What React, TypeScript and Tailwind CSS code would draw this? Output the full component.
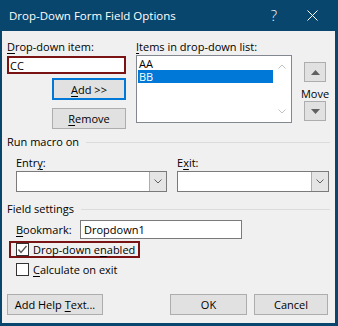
import type { ReactNode } from 'react'

const font = "font-['Open_Sans','Noto_Sans',sans-serif] text-[11px] leading-[15px] text-black"

function U({ children }: { children: ReactNode }) {
  return <span className="underline underline-offset-[2px] decoration-1">{children}</span>
}

function Button({ children, className = '', focused = false }: { children: ReactNode; className?: string; focused?: boolean }) {
  return (
    <div
      className={`flex items-center justify-center bg-[#e1e1e1] ${focused ? 'border-2 border-[#0078d7]' : 'border border-[#adadad]'} ${className}`}
    >
      {children}
    </div>
  )
}

function Chevron({ up = false, color = '#606060' }: { up?: boolean; color?: string }) {
  return (
    <svg width="8" height="5" viewBox="0 0 8 5" className="block">
      <polyline
        points={up ? '0.5,4.5 4,1 7.5,4.5' : '0.5,0.5 4,4 7.5,0.5'}
        fill="none"
        stroke={color}
        strokeWidth="1"
      />
    </svg>
  )
}

function Combo({ className = '' }: { className?: string }) {
  return (
    <div className={`flex h-[21px] border border-[#7a7a7a] bg-white ${className}`}>
      <div className="flex-1" />
      <div className="flex w-[17px] items-center justify-center border-l border-[#adadad] bg-[#e5e5e5]">
        <Chevron />
      </div>
    </div>
  )
}

function GroupHeader({ label }: { label: string }) {
  return (
    <div className="flex items-center">
      <span>{label}</span>
      <div className="ml-[7px] mt-[1px] h-px flex-1 bg-[#dcdcdc]" />
    </div>
  )
}

function Checkbox({ checked = false }: { checked?: boolean }) {
  return (
    <div className="flex h-[13px] w-[13px] items-center justify-center border border-[#333333] bg-white">
      {checked && (
        <svg width="11" height="11" viewBox="0 0 11 11" className="block">
          <polyline points="1.5,5.5 4,8.5 9.5,2" fill="none" stroke="#555555" strokeWidth="1.3" />
        </svg>
      )}
    </div>
  )
}

export default function App() {
  return (
    <div className={`flex h-[326px] w-[338px] flex-col bg-[#08466d] ${font}`}>
      {/* Title bar */}
      <div className="flex h-[31px] items-center pl-[9px] text-white">
        <span className="text-[11.5px] leading-[15px]">Drop-Down Form Field Options</span>
        <span className="ml-auto mr-[30px] text-[15px] font-light leading-[15px]">?</span>
        <svg width="11" height="11" viewBox="0 0 11 11" className="mr-[20px] block">
          <path d="M0.5 0.5 L10.5 10.5 M10.5 0.5 L0.5 10.5" stroke="white" strokeWidth="1" />
        </svg>
      </div>

      <div className="mb-[3px] ml-[2px] mr-[3px] flex flex-1 flex-col bg-[#f0f0f0] pl-[5px] pr-[5px] pt-[8px]">
        {/* Top row */}
        <div className="flex">
          <div className="flex w-[119px] flex-col">
            <span>
              <U>D</U>rop-down item:
            </span>
            <div className="mt-[2px] flex h-[18px] items-center border-2 border-[#7a1414] bg-white pl-[1px]">CC</div>
            <Button focused className="ml-[45px] mt-[4px] h-[22px] w-[74px]">
              <span>
                <U>A</U>dd &gt;&gt;
              </span>
            </Button>
            <Button className="ml-[45px] mt-[8px] h-[21px] w-[74px]">
              <span>
                <U>R</U>emove
              </span>
            </Button>
          </div>

          <div className="ml-[10px] flex w-[156px] flex-col">
            <span>
              <U>I</U>tems in drop-down list:
            </span>
            <div className="mt-px flex h-[68px] border border-[#828790] bg-white">
              <div className="flex flex-1 flex-col pl-px pt-px leading-[13px]">
                <div className="flex h-[13px] items-center pl-px">AA</div>
                <div className="flex h-[13px] items-center bg-[#0078d7] pl-px text-white">BB</div>
              </div>
              <div className="flex w-[18px] flex-col items-center justify-between py-[8px]">
                <Chevron up color="#c2c2c2" />
                <Chevron color="#c2c2c2" />
              </div>
            </div>
          </div>

          <div className="ml-[9px] flex w-[28px] flex-col items-center">
            <Button className="mt-[23px] h-[20px] w-[22px]">
              <svg width="9" height="5" viewBox="0 0 9 5" className="block">
                <polygon points="0,5 4.5,0 9,5" fill="#606060" />
              </svg>
            </Button>
            <span className="mt-[4px]">Move</span>
            <Button className="h-[20px] w-[22px]">
              <svg width="9" height="5" viewBox="0 0 9 5" className="block">
                <polygon points="0,0 4.5,5 9,0" fill="#606060" />
              </svg>
            </Button>
          </div>
        </div>

        {/* Run macro on */}
        <div className="mt-[5px]">
          <GroupHeader label="Run macro on" />
        </div>
        <div className="mt-[6px] flex pl-[9px]">
          <div className="flex w-[151px] flex-col">
            <span>
              Entr<U>y</U>:
            </span>
            <Combo className="mt-px" />
          </div>
          <div className="ml-[10px] flex w-[152px] flex-col">
            <span>
              E<U>x</U>it:
            </span>
            <Combo className="mt-px" />
          </div>
        </div>

        {/* Field settings */}
        <div className="mt-[9px]">
          <GroupHeader label="Field settings" />
        </div>
        <div className="mt-[4px] flex items-center pl-[9px]">
          <span className="w-[64px]">
            <U>B</U>ookmark:
          </span>
          <div className="flex h-[19px] w-[162px] items-center border border-[#7a7a7a] bg-white pl-[3px]">Dropdown1</div>
        </div>
        <div className="ml-[2px] mt-[2px] flex h-[17px] w-[131px] items-center border-2 border-[#7a1414] pl-[5px]">
          <Checkbox checked />
          <span className="ml-[4px]">
            Drop-down e<U>n</U>abled
          </span>
        </div>
        <div className="mt-[3px] flex h-[17px] items-center pl-[9px]">
          <Checkbox />
          <span className="ml-[4px]">
            <U>C</U>alculate on exit
          </span>
        </div>

        {/* Bottom buttons */}
        <div className="mt-[16px] flex">
          <Button className="h-[21px] w-[96px]">
            <span>
              Add Help <U>T</U>ext...
            </span>
          </Button>
          <Button className="ml-[67px] h-[21px] w-[77px]">OK</Button>
          <Button className="ml-[7px] h-[21px] w-[74px]">Cancel</Button>
        </div>
      </div>
    </div>
  )
}
